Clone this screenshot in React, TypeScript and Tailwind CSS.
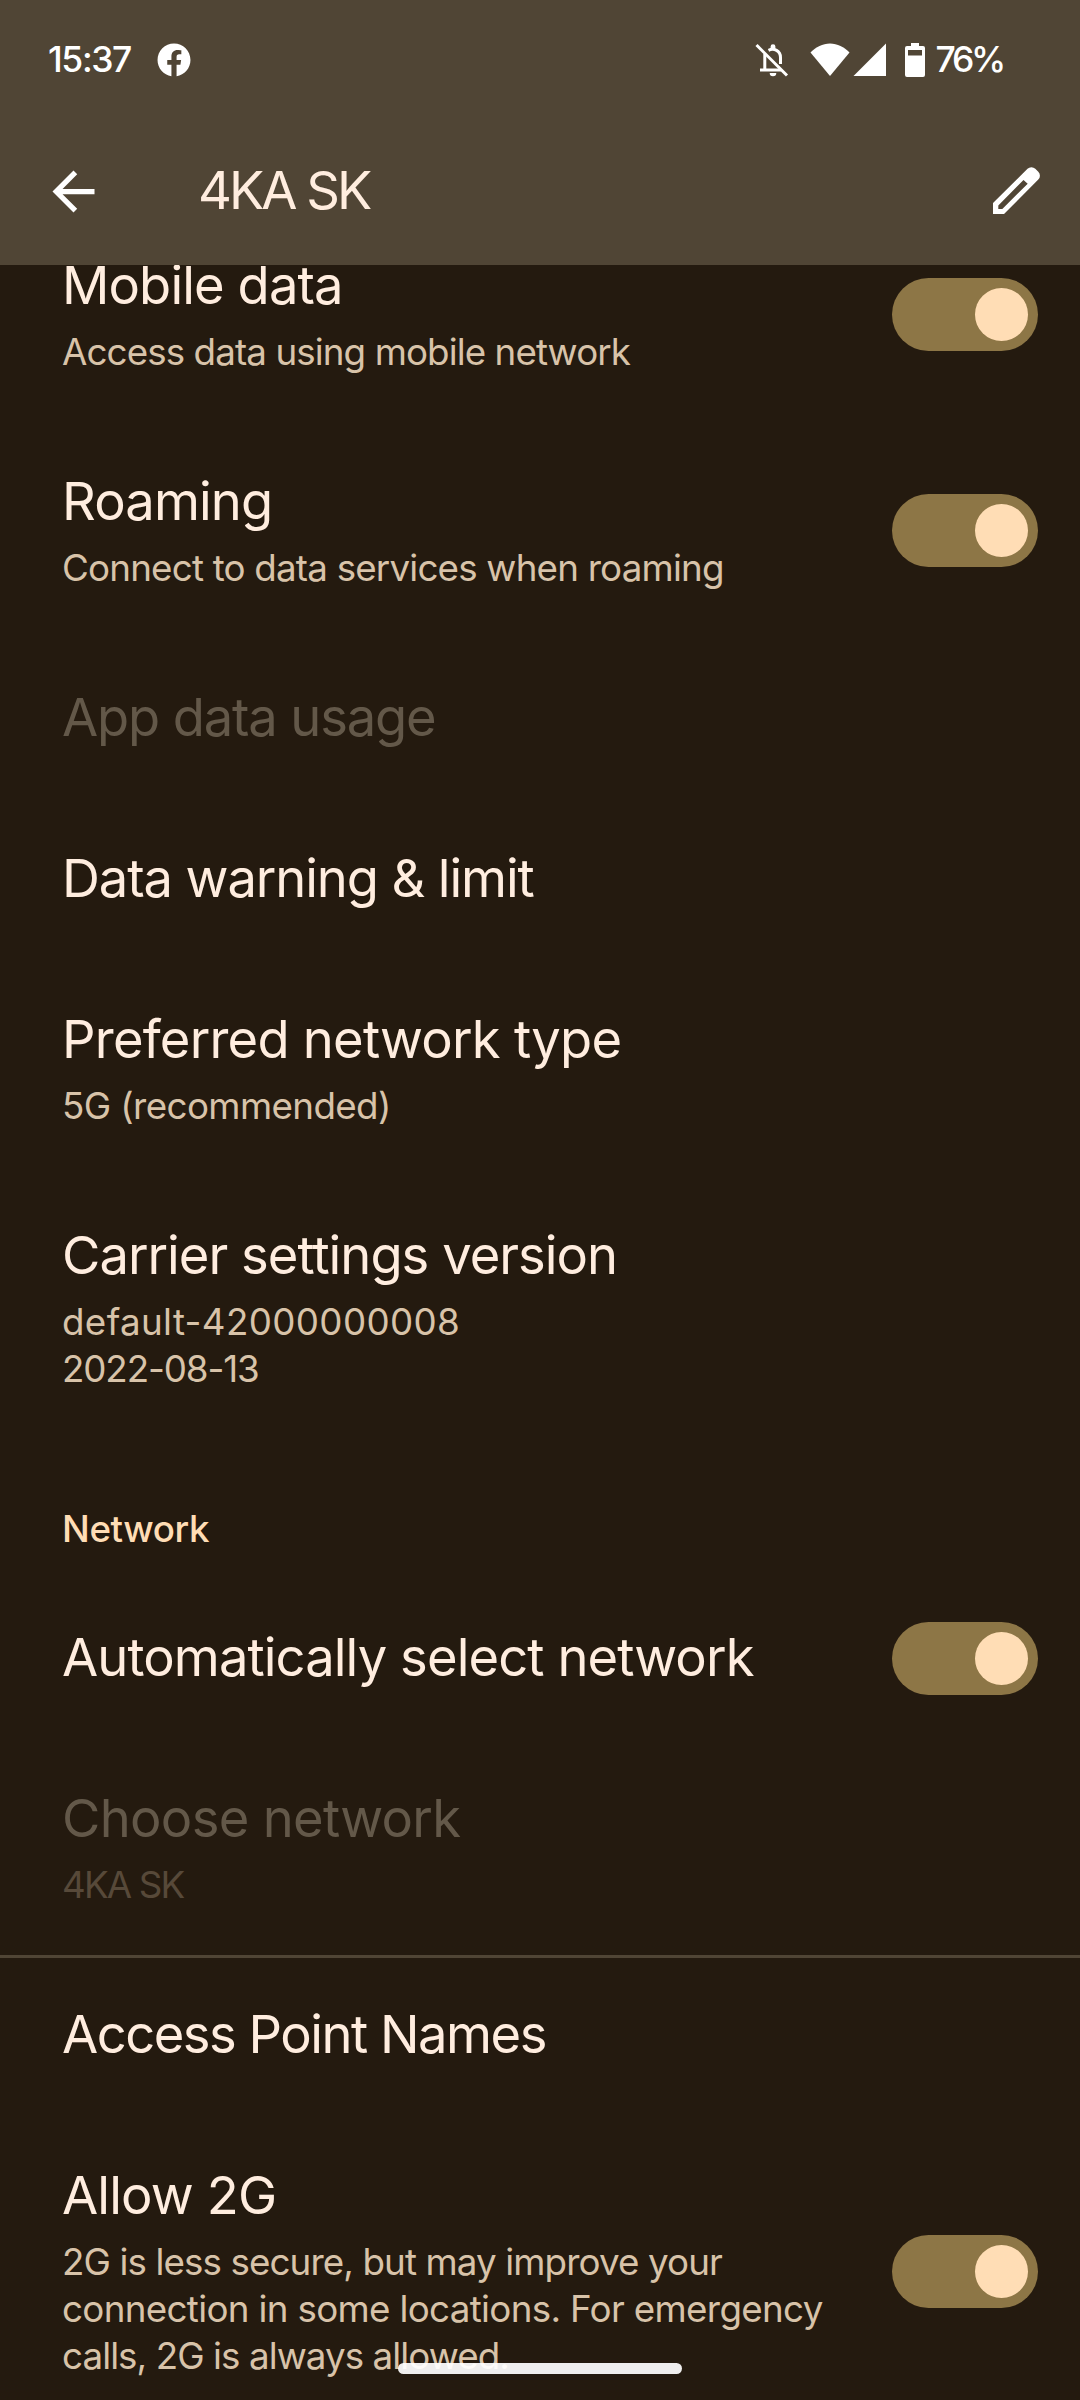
import React from "react";
import clsx from "clsx";
import { FaFacebook } from "react-icons/fa";
import { MdArrowBack } from "react-icons/md";

type Setting = {
  title: string;
  titleTracking: string;
  summary?: { text: string; tracking: string }[];
  disabled?: boolean;
  enabled?: boolean;
};

const simSettings: Setting[] = [
  {
    title: "Mobile data",
    titleTracking: "tracking-[-0.89px]",
    summary: [{ text: "Access data using mobile network", tracking: "tracking-[-0.9px]" }],
    enabled: true,
  },
  {
    title: "Roaming",
    titleTracking: "tracking-[-0.87px]",
    summary: [{ text: "Connect to data services when roaming", tracking: "tracking-[-0.8px]" }],
    enabled: true,
  },
  { title: "App data usage", titleTracking: "tracking-[-1.15px]", disabled: true },
  { title: "Data warning & limit", titleTracking: "tracking-[-1.1px]" },
  {
    title: "Preferred network type",
    titleTracking: "tracking-[-0.77px]",
    summary: [{ text: "5G (recommended)", tracking: "tracking-[-0.61px]" }],
  },
  {
    title: "Carrier settings version",
    titleTracking: "tracking-[-0.97px]",
    summary: [
      { text: "default-42000000008", tracking: "tracking-[0.36px]" },
      { text: "2022-08-13", tracking: "tracking-[-1.12px]" },
    ],
  },
];

const networkSettings: Setting[] = [
  { title: "Automatically select network", titleTracking: "tracking-[-0.9px]", enabled: true },
  {
    title: "Choose network",
    titleTracking: "tracking-[-0.68px]",
    summary: [{ text: "4KA SK", tracking: "tracking-[-1.82px]" }],
    disabled: true,
  },
];

const advancedSettings: Setting[] = [
  { title: "Access Point Names", titleTracking: "tracking-[-1.49px]" },
  {
    title: "Allow 2G",
    titleTracking: "tracking-[-0.85px]",
    summary: [
      { text: "2G is less secure, but may improve your", tracking: "tracking-[-0.89px]" },
      { text: "connection in some locations. For emergency", tracking: "tracking-[-0.67px]" },
      { text: "calls, 2G is always allowed.", tracking: "tracking-[-0.92px]" },
    ],
    enabled: true,
  },
];

function Switch() {
  return (
    <span className="flex h-[73px] w-[146px] shrink-0 items-center justify-end rounded-full bg-[#8d7646] pr-2.5">
      <span className="size-[53px] rounded-full bg-[#ffddb5]" />
    </span>
  );
}

function SettingRow({ item }: { item: Setting }) {
  return (
    <div className="flex items-center justify-between pr-[42px] pl-[62px]">
      <div className={clsx("pt-[46.5px]", item.summary ? "pb-[47.5px]" : "pb-[50.5px]")}>
        <h2
          className={clsx(
            "text-[52.5px] leading-[64px] whitespace-nowrap",
            item.titleTracking,
            item.disabled ? "text-[#635849]" : "text-[#ffeddf]"
          )}
        >
          {item.title}
        </h2>
        {item.summary && (
          <div className="mt-[11px]">
            {item.summary.map((line) => (
              <p
                key={line.text}
                className={clsx(
                  "text-[36.75px] leading-[47px] whitespace-nowrap",
                  line.tracking,
                  item.disabled ? "text-[#574939]" : "text-[#d8c3a9]"
                )}
              >
                {line.text}
              </p>
            ))}
          </div>
        )}
      </div>
      {item.enabled && <Switch />}
    </div>
  );
}

function BellOffIcon() {
  return (
    <svg className="h-[34px] w-[34px]" viewBox="0 0 34 34" fill="none" stroke="#fff" strokeWidth="3">
      <path d="M1.5 2 32 32.500" />
      <path d="M9.800 11v16M5 27h21" />
      <path d="M13.500 7.300C19 4.500 25.500 8 25.500 14.500V21" />
      <path d="M18 1.200a2.400 2.400 0 0 1 2.400 2.400v2h-4.800v-2A2.400 2.400 0 0 1 18 1.200ZM14.700 30h6.600a3.300 3.300 0 0 1-6.600 0Z" fill="#fff" stroke="none" />
    </svg>
  );
}

function StatusBar() {
  return (
    <div className="flex h-[119px] items-center justify-between pr-[77px] pl-12 text-white">
      <div className="flex items-center gap-[26px]">
        <span className="text-[35.5px] leading-none font-medium tracking-[-1.4px]">15:37</span>
        <FaFacebook className="size-[34px]" />
      </div>
      <div className="flex items-center">
        <BellOffIcon />
        <svg className="ml-[21px] h-[34px] w-10" viewBox="0 0 40 34" fill="#fff">
          <path d="M20 33 .5 9.500C6 4 12.500 .5 20 .5s14 3.500 19.500 9Z" />
        </svg>
        <svg className="ml-[3px] h-[34px] w-[33px]" viewBox="0 0 33 34" fill="#fff">
          <path d="M33 .5V33H.5Z" />
        </svg>
        <svg className="ml-[19px] h-[34px] w-5" viewBox="0 0 20 34" fill="#fff">
          <path
            fillRule="evenodd"
            d="M6 0h8v3h4a2 2 0 0 1 2 2v27a2 2 0 0 1-2 2H2a2 2 0 0 1-2-2V5a2 2 0 0 1 2-2h4ZM3 7v5.500h14V7Z"
          />
        </svg>
        <span className="ml-[11px] text-[35.5px] leading-none font-medium tracking-[-3.3px]">76%</span>
      </div>
    </div>
  );
}

function AppBar() {
  return (
    <header className="h-[265px] shrink-0 bg-[#504535]">
      <StatusBar />
      <div className="flex h-[146px] items-center pr-10 pb-1 pl-[42px] text-white">
        <MdArrowBack className="mt-[3px] size-[63px]" />
        <h1 className="ml-[93px] text-[52.5px] leading-none tracking-[-2.97px] text-[#ffeddf]">4KA SK</h1>
        <svg className="ml-auto size-[47px]" viewBox="0 0 47 47" fill="#fff">
          <path
            fillRule="evenodd"
            d="M0 36 34.500 1.800a5.500 5.500 0 0 1 7.800 0l3 3a5.500 5.500 0 0 1 0 7.800L11 47H0ZM5.300 38.500V42h4L34.700 16.700 30.500 13Z"
          />
        </svg>
      </div>
    </header>
  );
}

export default function App() {
  return (
    <div className="relative flex h-[2400px] w-[1080px] flex-col overflow-hidden bg-[#241a0f] font-[Inter,sans-serif]">
      <AppBar />
      <main className="flex-1 overflow-hidden">
        {/* list is scrolled partway under the app bar */}
        <section className="-mt-[58.5px]">
          {simSettings.map((item) => (
            <SettingRow key={item.title} item={item} />
          ))}
        </section>
        <section>
          <h3 className="h-[138.5px] pt-[65.5px] pl-[62px] text-[36.75px] leading-[47px] font-medium tracking-[-0.4px] text-[#ffddb5]">
            Network
          </h3>
          {networkSettings.map((item) => (
            <SettingRow key={item.title} item={item} />
          ))}
        </section>
        <section>
          <hr className="-mb-[3px] h-[3px] border-0 bg-[#504535]" />
          {advancedSettings.map((item) => (
            <SettingRow key={item.title} item={item} />
          ))}
        </section>
      </main>
      {/* gesture navigation handle */}
      <div className="absolute bottom-[26px] left-[398px] h-[11px] w-[284px] rounded-full bg-white/93" />
    </div>
  );
}
